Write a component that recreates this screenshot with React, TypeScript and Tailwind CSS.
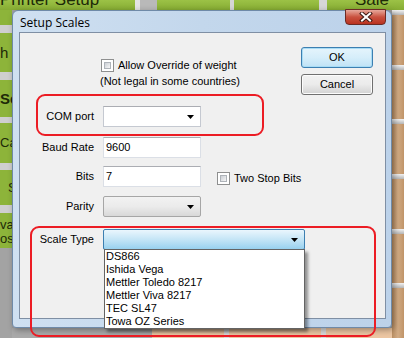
import React from "react";

const Arrow = () => (
  <svg width="7" height="4" viewBox="0 0 7 4" className="block">
    <path d="M0 0H7L3.5 4Z" fill="#000" />
  </svg>
);

const Check = () => (
  <div className="w-[13px] h-[13px] border border-[#8e8f8f] bg-white p-[2px] shrink-0">
    <div className="w-full h-full bg-gradient-to-br from-[#cbcfd5] to-[#f6f6f6] border border-[#aeb3b9]" />
  </div>
);

const items = [
  "DS866",
  "Ishida Vega",
  "Mettler Toledo 8217",
  "Mettler Viva 8217",
  "TEC SL47",
  "Towa OZ Series",
];

export default function App() {
  return (
    <div
      className="relative w-[404px] h-[338px] overflow-hidden bg-[#9e9e9e] text-[11px] text-black"
      style={{ fontFamily: '"Liberation Sans", Arial, sans-serif' }}
    >
      {/* background app: top bar */}
      <div className="absolute left-0 top-0 w-[404px] h-[10px] bg-[#8db43a] flex">
        <div className="w-[135px] h-full bg-gradient-to-b from-[#9cc246] to-[#86ac33] relative overflow-hidden">
          <span className="absolute left-[0px] top-[-10px] text-[17px] leading-[20px] text-[#1d2a08] whitespace-nowrap">Printer Setup</span>
        </div>
        <div className="w-[5px] h-full bg-[#e4e4e4]" />
        <div className="w-[17px] h-full bg-[#b9b9b9]" />
        <div className="w-[73px] h-full bg-gradient-to-b from-[#9cc246] to-[#86ac33]" />
        <div className="w-[4px] h-full bg-[#d6d6d6]" />
        <div className="w-[85px] h-full bg-gradient-to-b from-[#9cc246] to-[#86ac33]" />
        <div className="w-[8px] h-full bg-[#d6d6d6]" />
        <div className="flex-1 h-full bg-gradient-to-b from-[#9cc246] to-[#86ac33] relative overflow-hidden">
          <span className="absolute left-[28px] top-[-10px] text-[17px] leading-[20px] text-[#1d2a08]">Sale</span>
        </div>
      </div>

      {/* left strip */}
      <div className="absolute left-0 top-[10px] w-[12px] h-[328px] flex flex-col bg-[#a3a3a3]">
        <div className="h-[15px] bg-[#8db43a]" />
        <div className="h-[8px] bg-[#cfcfcf]" />
        <div className="h-[39px] bg-[#8db43a] overflow-hidden text-[15px] leading-[39px] text-[#1d2a08]">h</div>
        <div className="h-[8px] bg-[#cfcfcf]" />
        <div className="h-[37px] bg-[#8db43a] overflow-hidden text-[15px] font-bold leading-[37px] text-[#1d2a08]">Sc</div>
        <div className="h-[6px] bg-[#cfcfcf]" />
        <div className="h-[40px] bg-[#8db43a] overflow-hidden text-[13px] leading-[40px] text-[#1d2a08]">Ca</div>
        <div className="h-[7px] bg-[#cfcfcf]" />
        <div className="h-[35px] bg-[#8db43a] overflow-hidden text-[13px] leading-[35px] pl-[8px] text-[#1d2a08]">S</div>
        <div className="h-[8px] bg-[#cfcfcf]" />
        <div className="h-[35px] bg-[#8db43a] overflow-hidden text-[13px] leading-[14px] pt-[5px] text-[#1d2a08]">
          va<br />os
        </div>
      </div>

      {/* right strip */}
      <div className="absolute left-[392px] top-[10px] w-[12px] h-[328px] flex flex-col">
        {[0, 1, 2, 3, 4, 5].map((i) => (
          <React.Fragment key={i}>
            <div className="h-[5px] bg-gradient-to-b from-[#f2f2f2] to-[#b5b5b5]" />
            <div className="h-[50px] bg-gradient-to-r from-[#b98e62] via-[#d2ab84] to-[#c09468]" />
          </React.Fragment>
        ))}
      </div>

      {/* bottom strip */}
      <div className="absolute left-[12px] top-[328px] w-[380px] h-[10px] flex">
        <div className="w-[140px] h-full bg-[#a9a9a9]" />
        <div className="w-[72px] h-full bg-[#ecc6a2]" />
        <div className="w-[5px] h-full bg-[#d9d9d9]" />
        <div className="w-[92px] h-full bg-[#ecc6a2]" />
        <div className="w-[5px] h-full bg-[#d9d9d9]" />
        <div className="flex-1 h-full bg-[#ecc6a2]" />
      </div>

      {/* dialog */}
      <div className="absolute left-[12px] top-[10px] w-[380px] h-[318px] rounded-t-[6px] rounded-b-[4px] border border-[#6f8aa8] bg-gradient-to-r from-[#cfe0f1] via-[#c3d7ec] to-[#bcd2ea] shadow-[2px_2px_6px_rgba(0,0,0,0.35)] flex flex-col">
        <div className="h-[21px] flex items-start relative">
          <span
            className="ml-[7px] mt-[3px] text-[12px] text-black"
            style={{ fontFamily: '"Open Sans", "Liberation Sans", sans-serif' }}
          >
            Setup Scales
          </span>
          <div className="absolute left-[332px] top-[-2px] w-[41px] h-[16px] rounded-b-[4px] border border-[#6b2b24] bg-gradient-to-b from-[#e6a89c] via-[#c9513f] to-[#b9321f] flex items-center justify-center">
            <svg width="14" height="10" viewBox="0 0 14 10">
              <path d="M3 1.5L11 8.5M11 1.5L3 8.5" stroke="#3d1a14" strokeWidth="4" strokeLinecap="square" />
              <path d="M3 1.5L11 8.5M11 1.5L3 8.5" stroke="#ffffff" strokeWidth="2" strokeLinecap="square" />
            </svg>
          </div>
        </div>

        {/* client area */}
        <div className="ml-[6px] mr-[5px] h-[287px] border border-[#7f8fa4] bg-[#f0f0f0] relative flex">
          {/* form column */}
          <div className="w-[281px] flex flex-col">
            <div className="pt-[26px] pl-[80px] flex flex-col">
              <div className="flex items-center ml-[1px] h-[13px]">
                <Check />
                <span className="ml-[4px] leading-[13px]">Allow Override of weight</span>
              </div>
              <div className="mt-[2px] leading-[15px]">(Not legal in some countries)</div>
            </div>

            <div className="mt-[17px] grid grid-cols-[74px_auto] gap-x-[9px] items-center">
              <span className="text-right">COM port</span>
              <div className="w-[98px] h-[21px] bg-white border border-[#c5c9d1] border-t-[#abadb3] flex items-center justify-end pr-[6px]">
                <Arrow />
              </div>
            </div>

            <div className="mt-[10px] grid grid-cols-[74px_auto] gap-x-[9px] items-center">
              <span className="text-right">Baud Rate</span>
              <div className="w-[98px] h-[21px] bg-white border border-[#dbdfe6] border-t-[#abadb3] pl-[2px] leading-[18px]">9600</div>
            </div>

            <div className="mt-[8px] grid grid-cols-[74px_auto] gap-x-[9px] items-center">
              <span className="text-right">Bits</span>
              <div className="flex items-center">
                <div className="w-[98px] h-[21px] bg-white border border-[#dbdfe6] border-t-[#abadb3] pl-[2px] leading-[18px]">7</div>
                <div className="ml-[16px] mt-[3px] flex items-center">
                  <Check />
                  <span className="ml-[4px] whitespace-nowrap">Two Stop Bits</span>
                </div>
              </div>
            </div>

            <div className="mt-[9px] grid grid-cols-[74px_auto] gap-x-[9px] items-center">
              <span className="text-right">Parity</span>
              <div className="w-[98px] h-[21px] rounded-[2px] border border-[#a6a6a6] bg-gradient-to-b from-[#f2f2f2] via-[#ebebeb] to-[#d8d8d8] flex items-center justify-end pr-[6px]">
                <Arrow />
              </div>
            </div>

            <div className="mt-[12px] grid grid-cols-[74px_auto] gap-x-[9px] items-center">
              <span className="text-right">Scale Type</span>
              <div className="relative w-[202px] h-[21px]">
                <div className="w-full h-full rounded-[2px] border border-[#3c7fb1] bg-gradient-to-b from-[#eaf6fd] via-[#c4e5f6] to-[#98d1ef] flex items-center justify-end pr-[6px]">
                  <Arrow />
                </div>
                <div className="absolute left-[1px] top-[20px] w-[201px] border border-[#646464] bg-white shadow-[3px_3px_3px_rgba(0,0,0,0.4)] z-10">
                  {items.map((t) => (
                    <div key={t} className="h-[13px] leading-[13px] pl-[1px] whitespace-nowrap">
                      {t}
                    </div>
                  ))}
                </div>
              </div>
            </div>
          </div>

          {/* buttons column */}
          <div className="pt-[14px] flex flex-col gap-[6px]">
            <div className="w-[72px] h-[21px] rounded-[3px] border border-[#3c7fb1] bg-gradient-to-b from-[#e5f4fc] via-[#d6eefa] to-[#bfe2f5] shadow-[inset_0_0_0_1px_#a8dcf5] flex items-center justify-center">
              OK
            </div>
            <div className="w-[72px] h-[21px] rounded-[3px] border border-[#707070] bg-gradient-to-b from-[#f2f2f2] via-[#ebebeb] to-[#d2d2d2] shadow-[inset_0_0_0_1px_#fcfcfc] flex items-center justify-center">
              Cancel
            </div>
          </div>
        </div>
      </div>

      {/* annotations */}
      <div className="absolute left-[36px] top-[94px] w-[228px] h-[42px] border-2 border-[#ec1c24] rounded-[9px] pointer-events-none" />
      <div className="absolute left-[30px] top-[226px] w-[346px] h-[111px] border-2 border-[#ec1c24] rounded-[9px] pointer-events-none z-20" />
    </div>
  );
}
